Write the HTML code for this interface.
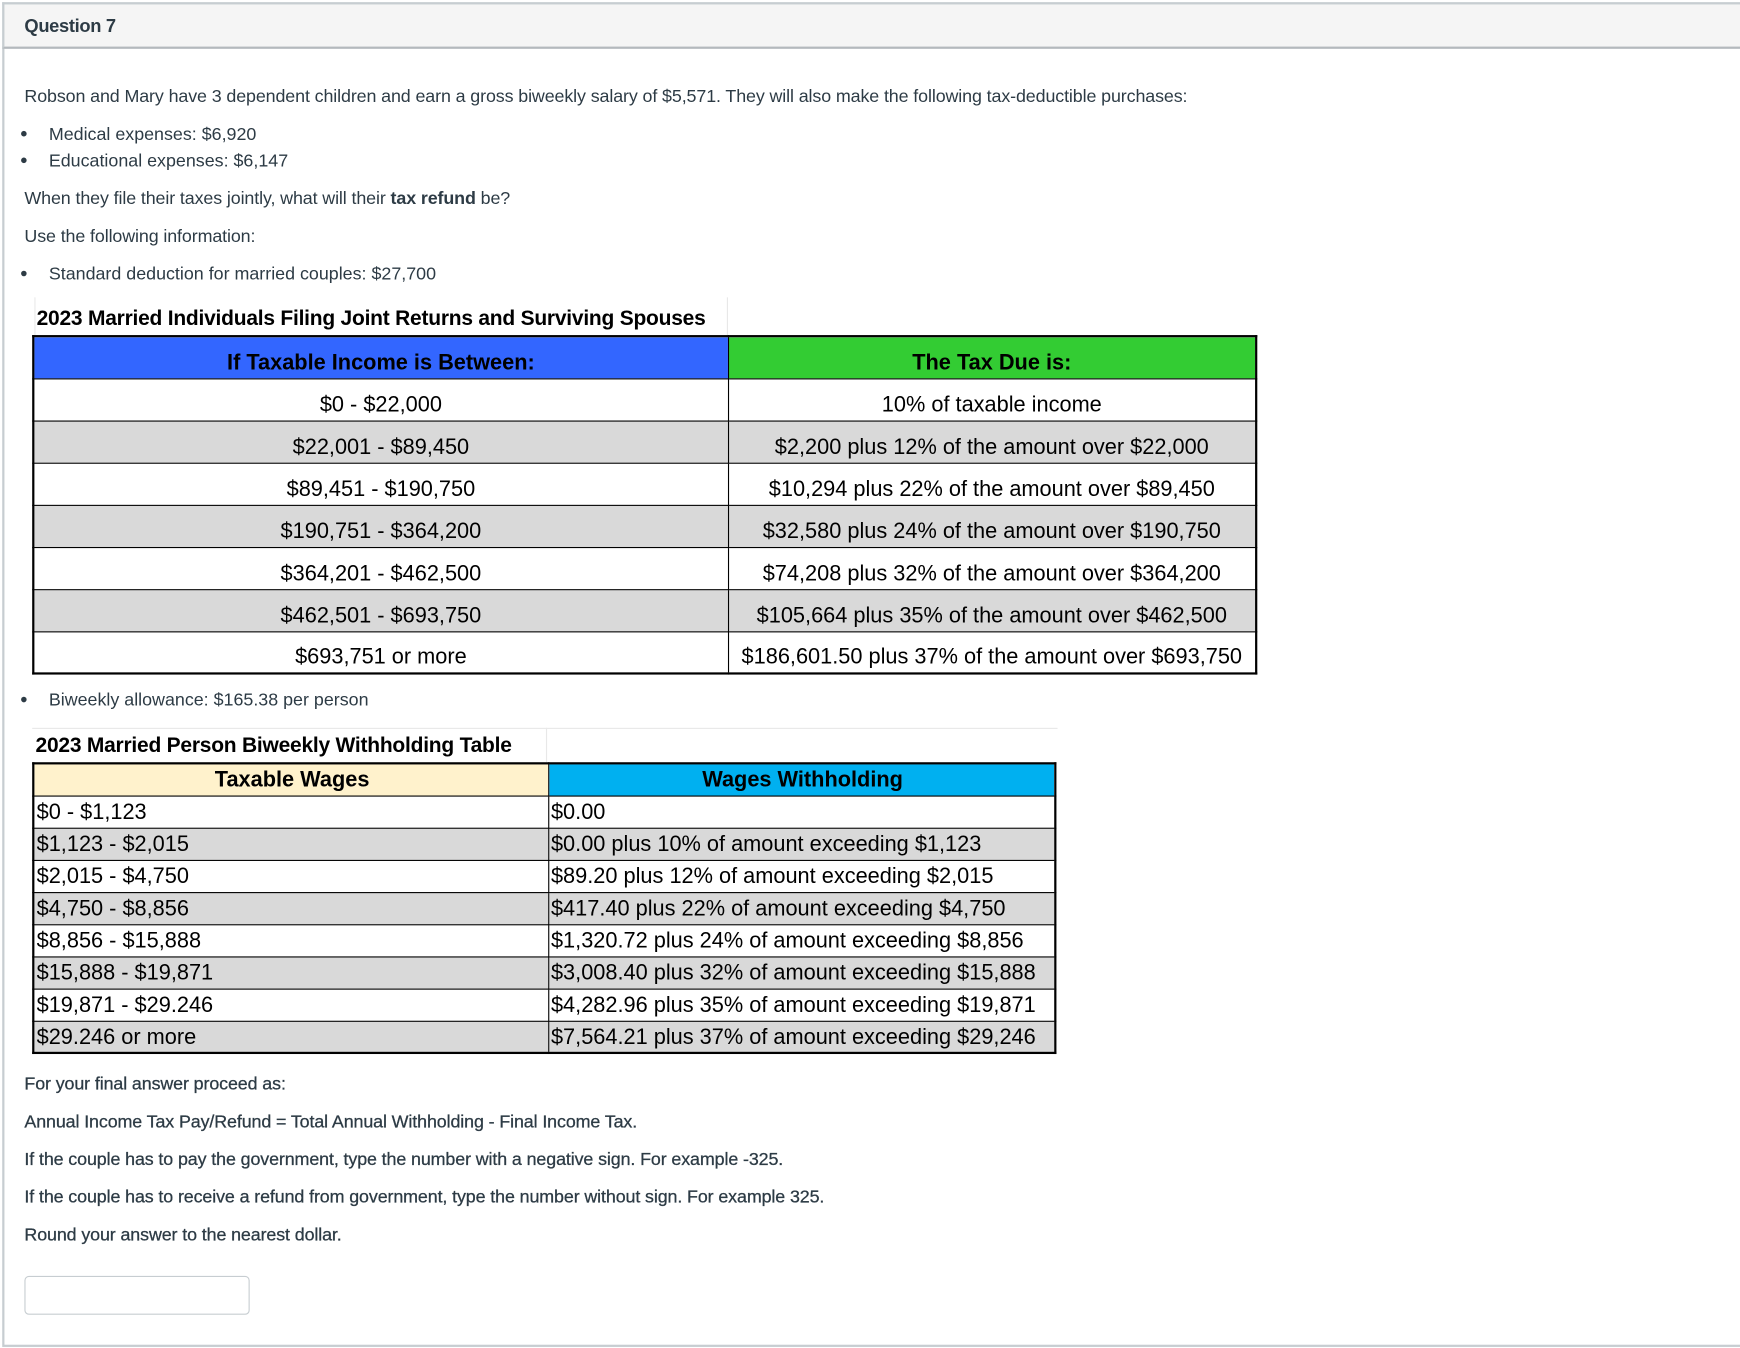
<!DOCTYPE html>
<html><head><meta charset="utf-8"><style>
*{margin:0;padding:0;box-sizing:border-box}
html,body{width:1740px;height:1348px;overflow:hidden;background:#fff}
#w{position:absolute;left:0;top:0;width:1568px;height:1215px;transform:scale(1.1097,1.1095);transform-origin:0 0;font-family:"Liberation Sans",sans-serif;color:#2d3b45}
.frame{position:absolute;left:2px;top:2px;width:1580px;height:1212px;border:2px solid #c7cdd1}
.hdr{position:absolute;left:2px;top:2px;width:1580px;height:42px;background:#f5f5f5;border:2px solid #c7cdd1;border-bottom:2px solid #b4b9bd}
.hdr span{position:absolute;left:18px;top:11px;font-size:16.5px;font-weight:bold;color:#2d3b45;letter-spacing:-0.3px}
.t{position:absolute;left:22px;font-size:16.1px;white-space:nowrap;letter-spacing:-0.1px}
.b{position:absolute;left:44px;font-size:16.1px;white-space:nowrap}
.dot{position:absolute;left:19px;width:5px;height:5px;border-radius:50%;background:#2d3b45}
.sb{font-weight:bold}
.tt{position:absolute;font-size:18.9px;font-weight:bold;color:#000;white-space:nowrap;letter-spacing:-0.2px}
table{position:absolute;border-collapse:collapse;font-size:19.6px;color:#000}
td{border:1px solid #000;white-space:nowrap;overflow:hidden}
#t1{left:29px;top:302px;width:1104px;border:2px solid #000}
#t1 td{height:38px;text-align:center;padding-top:9px;line-height:26px}
#t1 tr:nth-child(odd) td{background:#d9d9d9}
#t1 tr:first-child td{font-weight:bold}
#t2{left:29px;top:687px;width:923px;border:2px solid #000}
#t2 td{height:29px;padding:2px 0 0 2px}
#t2 tr:nth-child(odd) td{background:#d9d9d9}
#t2 tr:first-child td{font-weight:bold;text-align:center}
.inp{position:absolute;left:22px;top:1150px;width:203px;height:35px;border:1px solid #c7cdd1;border-radius:4px}
.g{position:absolute;background:#e8e8e8}
.d{color:#2d3b45;-webkit-text-stroke:0.25px #2d3b45}
</style></head><body><div id="w">
<div class="frame"></div>
<div class="hdr"><span>Question 7</span></div>
<div class="t" style="top:78px">Robson and Mary have 3 dependent children and earn a gross biweekly salary of $5,571. They will also make the following tax-deductible purchases:</div>
<div class="dot" style="top:118px"></div><div class="b" style="top:112px">Medical expenses: $6,920</div>
<div class="dot" style="top:142px"></div><div class="b" style="top:136px">Educational expenses: $6,147</div>
<div class="t" style="top:170px">When they file their taxes jointly, what will their <span class="sb">tax refund</span> be?</div>
<div class="t" style="top:204px">Use the following information:</div>
<div class="dot" style="top:244px"></div><div class="b" style="top:238px">Standard deduction for married couples: $27,700</div>
<div class="g" style="left:31px;top:268px;width:1px;height:34px"></div>
<div class="g" style="left:655px;top:268px;width:1px;height:34px"></div>
<div class="tt" style="left:33px;top:277px">2023 Married Individuals Filing Joint Returns and Surviving Spouses</div>
<table id="t1">
<tr><td style="width:626px;background:#3366ff">If Taxable Income is Between:</td><td style="background:#33cc33">The Tax Due is:</td></tr>
<tr><td>$0 - $22,000</td><td>10% of taxable income</td></tr>
<tr><td>$22,001 - $89,450</td><td>$2,200 plus 12% of the amount over $22,000</td></tr>
<tr><td>$89,451 - $190,750</td><td>$10,294 plus 22% of the amount over $89,450</td></tr>
<tr><td>$190,751 - $364,200</td><td>$32,580 plus 24% of the amount over $190,750</td></tr>
<tr><td>$364,201 - $462,500</td><td>$74,208 plus 32% of the amount over $364,200</td></tr>
<tr><td>$462,501 - $693,750</td><td>$105,664 plus 35% of the amount over $462,500</td></tr>
<tr><td>$693,751 or more</td><td>$186,601.50 plus 37% of the amount over $693,750</td></tr>
</table>
<div class="dot" style="top:628px"></div><div class="b" style="top:622px">Biweekly allowance: $165.38 per person</div>
<div class="g" style="left:29px;top:656px;width:924px;height:1px"></div>
<div class="g" style="left:492px;top:656px;width:1px;height:31px"></div>
<div class="tt" style="left:32px;top:662px">2023 Married Person Biweekly Withholding Table</div>
<table id="t2">
<tr><td style="width:464px;background:#fff2cc">Taxable Wages</td><td style="background:#00b0f0">Wages Withholding</td></tr>
<tr><td>$0 - $1,123</td><td>$0.00</td></tr>
<tr><td>$1,123 - $2,015</td><td>$0.00 plus 10% of amount exceeding $1,123</td></tr>
<tr><td>$2,015 - $4,750</td><td>$89.20 plus 12% of amount exceeding $2,015</td></tr>
<tr><td>$4,750 - $8,856</td><td>$417.40 plus 22% of amount exceeding $4,750</td></tr>
<tr><td>$8,856 - $15,888</td><td>$1,320.72 plus 24% of amount exceeding $8,856</td></tr>
<tr><td>$15,888 - $19,871</td><td>$3,008.40 plus 32% of amount exceeding $15,888</td></tr>
<tr><td>$19,871 - $29.246</td><td>$4,282.96 plus 35% of amount exceeding $19,871</td></tr>
<tr><td>$29.246 or more</td><td>$7,564.21 plus 37% of amount exceeding $29,246</td></tr>
</table>
<div class="t d" style="top:968px">For your final answer proceed as:</div>
<div class="t d" style="top:1002px">Annual Income Tax Pay/Refund = Total Annual Withholding - Final Income Tax.</div>
<div class="t d" style="top:1036px">If the couple has to pay the government, type the number with a negative sign. For example -325.</div>
<div class="t d" style="top:1070px">If the couple has to receive a refund from government, type the number without sign. For example 325.</div>
<div class="t d" style="top:1104px">Round your answer to the nearest dollar.</div>
<div class="inp"></div>
</div></body></html>
